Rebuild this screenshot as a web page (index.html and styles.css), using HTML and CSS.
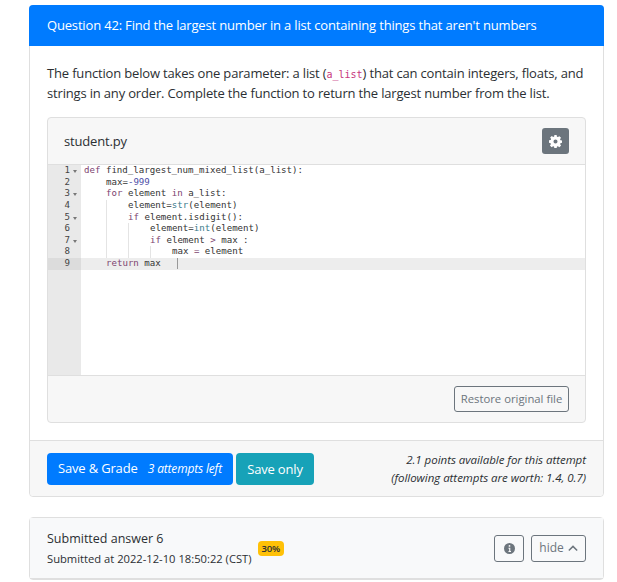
FILE: index.html
```html
<!DOCTYPE html>
<html lang="en">
<head>
<meta charset="utf-8">
<title>Question 42</title>
<link rel="stylesheet" href="styles.css">
</head>
<body>
<main class="page">
  <section class="card">
    <h1 class="card-title">Question 42: Find the largest number in a list containing things that aren't numbers</h1>
    <div class="card-body">
      <p class="prompt">The function below takes one parameter: a list (<code>a_list</code>) that can contain integers, floats, and strings in any order. Complete the function to return the largest number from the list.</p>
      <div class="file">
        <div class="file-head">
          <span class="file-name">student.py</span>
          <button class="btn-gear" aria-label="Settings">
            <svg viewBox="0 0 16 16" width="13" height="13"><path fill="#fff" fill-rule="evenodd" d="M6.600 0h2.800l.4 2.100 1.200.5 1.800-1.200 2 2-1.200 1.800.5 1.200 2.100.4v2.800l-2.100.4-.5 1.200 1.200 1.800-2 2-1.800-1.200-1.200.5-.4 2.100H6.600l-.4-2.100-1.200-.5-1.800 1.200-2-2 1.200-1.800-.5-1.200L0 9.400V6.600l2.100-.4.500-1.200-1.200-1.800 2-2 1.800 1.200 1.200-.5zM8 5.500a2.500 2.500 0 1 0 0 5 2.500 2.500 0 0 0 0-5z"/></svg>
          </button>
        </div>
        <div class="editor">
          <div class="gutter">
            <span class="ln fold">1</span><span class="ln">2</span><span class="ln fold">3</span><span class="ln">4</span><span class="ln fold">5</span><span class="ln">6</span><span class="ln fold">7</span><span class="ln">8</span><span class="ln active">9</span>
          </div>
          <div class="code">
<div class="line"><span class="k">def</span> find_largest_num_mixed_list(a_list):</div>
<div class="line i1">max=<span class="n">-999</span></div>
<div class="line i1"><span class="k">for</span> element <span class="k">in</span> a_list:</div>
<div class="line i2">element=<span class="f">str</span>(element)</div>
<div class="line i2"><span class="k">if</span> element.isdigit():</div>
<div class="line i3">element=<span class="f">int</span>(element)</div>
<div class="line i3"><span class="k">if</span> element <span class="k">&gt;</span> max :</div>
<div class="line i4">max <span class="k">=</span> element</div>
<div class="line i1 current"><span class="k">return</span> max&nbsp;&nbsp;&nbsp;<span class="caret"></span></div>
          </div>
        </div>
        <div class="file-foot">
          <button class="btn-outline btn-restore">Restore original file</button>
        </div>
      </div>
    </div>
    <footer class="card-foot">
      <div class="actions">
        <button class="btn btn-primary">Save &amp; Grade <em>3 attempts left</em></button>
        <button class="btn btn-info">Save only</button>
      </div>
      <p class="points">2.1 points available for this attempt<br>(following attempts are worth: 1.4, 0.7)</p>
    </footer>
  </section>
  <section class="card answer">
    <header class="answer-head">
      <div class="answer-info">
        <div class="answer-meta">
          <div>Submitted answer 6</div>
          <div class="answer-time">Submitted at 2022-12-10 18:50:22 (CST)</div>
        </div>
        <span class="badge">30%</span>
      </div>
      <div class="answer-actions">
        <button class="btn-outline btn-icon" aria-label="Info">
          <svg viewBox="0 0 16 16" width="11" height="11"><path fill="#6c757d" fill-rule="evenodd" d="M8 0a8 8 0 1 0 0 16A8 8 0 0 0 8 0zM8 3a1.300 1.300 0 1 1 0 2.600A1.300 1.300 0 0 1 8 3zM6.500 7h2.700v4.500h1V13H6.500v-1.500h1v-3h-1z"/></svg>
        </button>
        <button class="btn-outline btn-hide">hide
          <svg viewBox="0 0 12 8" width="10" height="7"><path fill="none" stroke="#6c757d" stroke-width="1.800" d="M1 6.500l5-5 5 5"/></svg>
        </button>
      </div>
    </header>
  </section>
</main>
</body>
</html>
```
FILE: styles.css
```css
* { box-sizing: border-box; }
html, body { margin: 0; height: 582px; overflow: hidden; }
body { background: #fff; color: #2b2f33; font-family: "Open Sans", "Noto Sans", sans-serif; font-size: 13px; letter-spacing: -0.17px; line-height: 20px; }
.page { padding: 5px 13px 0 29px; }
.card { border: 1px solid #dfdfdf; border-radius: 4px; background: #fff; }
.card-title { margin: -1px -1px 0; height: 41px; padding: 0 18px; background: #007bff; border-radius: 4px 4px 0 0; color: #fff; font-size: 13px; font-weight: 400; line-height: 41px; white-space: nowrap; }
.card-body { padding: 17px; height: 394px; }
.prompt { margin: 0 0 14px; }
code { font-family: "DejaVu Sans Mono", monospace; font-size: 10px; line-height: 1; letter-spacing: 0; color: #c7377d; }
.file { border: 1px solid #dfdfdf; border-radius: 4px; background: #f7f7f7; overflow: hidden; }
.file-head { height: 47px; display: flex; align-items: center; justify-content: space-between; padding: 0 16px; border-bottom: 1px solid #dfdfdf; }
.file-name { font-size: 13px; }
.btn-gear { width: 27px; height: 26px; padding: 0; border: 0; border-radius: 3px; background: #6c757d; display: flex; align-items: center; justify-content: center; }
.editor { height: 210px; display: flex; background: #fff; font-family: "DejaVu Sans Mono", monospace; font-size: 9.100px; letter-spacing: 0; line-height: 11.650px; }
.gutter { width: 33px; flex: none; background: #e9e9e9; color: #444; }
.ln { display: block; height: 11.650px; padding-right: 11px; text-align: right; position: relative; }
.ln.fold::after { content: ""; position: absolute; right: 4px; top: 5px; border: 2px solid transparent; border-top: 3px solid #777; border-bottom: 0; }
.ln.active { background: #dcdcdc; }
.code { flex: 1; min-width: 0; color: #333; }
.line { height: 11.650px; padding-left: 3px; white-space: pre; background-repeat: no-repeat; }
.i1 { padding-left: 25px; }
.i2 { padding-left: 47px; background-image: linear-gradient(#e4e4e4, #e4e4e4); background-size: 1px 100%; background-position: 25px 0; }
.i3 { padding-left: 69px; background-image: linear-gradient(#e4e4e4, #e4e4e4), linear-gradient(#e4e4e4, #e4e4e4); background-size: 1px 100%, 1px 100%; background-position: 25px 0, 47px 0; }
.i4 { padding-left: 91px; background-image: linear-gradient(#e4e4e4, #e4e4e4), linear-gradient(#e4e4e4, #e4e4e4), linear-gradient(#e4e4e4, #e4e4e4); background-size: 1px 100%, 1px 100%, 1px 100%; background-position: 25px 0, 47px 0, 69px 0; }
.current { background: #ededed; }
.caret { display: inline-block; width: 1px; height: 11px; background: #999; vertical-align: top; }
.k { color: #7d4470; }
.n { color: #4e4ea8; }
.f { color: #3a7a8c; }
.file-foot { height: 47px; display: flex; align-items: center; justify-content: flex-end; padding: 0 16px; border-top: 1px solid #dfdfdf; }
.btn-outline { font: inherit; font-size: 12px; color: #6c757d; background: transparent; border: 1px solid #6c757d; border-radius: 3px; }
.file-foot .btn-restore { width: 115px; height: 26px; padding: 0; font-size: 11.300px; }
.card-foot { height: 56px; display: flex; align-items: center; justify-content: space-between; padding: 0 17px; background: #f7f7f7; border-top: 1px solid #dfdfdf; border-radius: 0 0 4px 4px; }
.actions { display: flex; gap: 3px; }
.btn { height: 32px; padding: 0 11px; border: 0; border-radius: 4px; color: #fff; font: inherit; letter-spacing: -0.17px; }
.btn-primary { background: #007bff; }
.btn-primary em { margin-left: 7px; font-size: 12px; }
.btn-info { width: 78px; padding: 0; background: #17a2b8; }
.points { margin: 0; text-align: right; font-style: italic; font-size: 11.500px; letter-spacing: -0.03px; line-height: 18px; }
.answer { margin-top: 20px; }
.answer-head { height: 61px; display: flex; align-items: center; justify-content: space-between; padding: 0 17px; background: #f8f9fa; border-bottom: 1px solid #dfdfdf; }
.answer-info { display: flex; align-items: center; gap: 6px; }
.answer-meta { padding-top: 2px; font-size: 12.500px; letter-spacing: 0; }
.answer-time { font-size: 11.200px; }
.badge { background: #ffc107; border-radius: 4px; font-size: 9.500px; font-weight: 600; line-height: 15px; padding: 0 4px; margin-top: 1px; }
.answer-actions { display: flex; gap: 7px; }
.answer-actions .btn-outline { height: 27px; display: flex; align-items: center; justify-content: center; }
.btn-icon { width: 30px; padding: 0; }
.btn-hide { width: 55px; padding: 0; gap: 4px; }
```
